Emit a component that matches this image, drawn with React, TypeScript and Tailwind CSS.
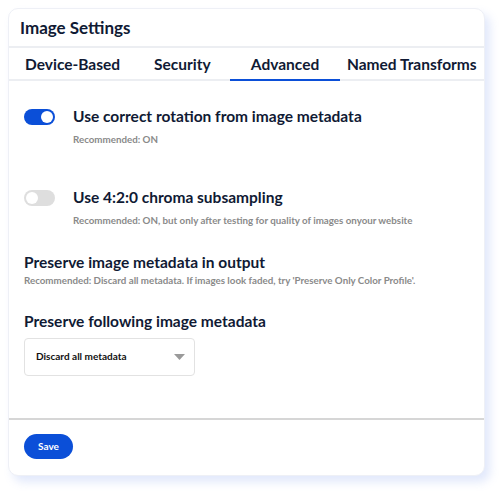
import { useState } from 'react';

function Toggle({ on, onChange }: { on: boolean; onChange: (v: boolean) => void }) {
  return (
    <button
      type="button"
      onClick={() => onChange(!on)}
      className={`flex h-[16px] w-[31px] shrink-0 items-center rounded-full px-[2px] ${
        on ? 'justify-end bg-[#0b4fd8]' : 'justify-start bg-[#dedede]'
      }`}
    >
      <span className="h-[12px] w-[12px] rounded-full bg-white" />
    </button>
  );
}

const font = { fontFamily: 'Lato, "Open Sans", sans-serif' };

export default function App() {
  const [rotation, setRotation] = useState(true);
  const [chroma, setChroma] = useState(false);
  const [tab, setTab] = useState('Advanced');

  return (
    <div className="h-[491px] w-[500px] bg-white p-2 text-[#101a34]" style={font}>
      <div className="flex h-[468px] w-[477px] flex-col rounded-[10px] border border-[#eef0f6] bg-white shadow-[5px_6px_10px_rgba(120,150,235,0.22)]">
        <div className="flex h-[39px] items-center border-b-2 border-[#eceef2] px-[11px] text-[17px] font-bold">
          Image Settings
        </div>

        <div className="flex h-[33px] items-stretch border-b-2 border-[#eceef2] pl-[16px] pt-[3px] text-[15.5px] font-bold">
          {[
            { name: 'Device-Based', w: 'w-[129px]', align: 'justify-start' },
            { name: 'Security', w: 'w-[76px]', align: 'justify-start' },
            { name: 'Advanced', w: 'w-[110px]', align: 'justify-center' },
            { name: 'Named Transforms', w: 'pl-[7px]', align: 'justify-start' },
          ].map((t) => (
            <button
              key={t.name}
              type="button"
              onClick={() => setTab(t.name)}
              className={`-mb-[2px] flex items-center border-b-2 ${t.w} ${t.align} ${
                tab === t.name ? 'border-[#0b4fd8]' : 'border-transparent'
              }`}
            >
              {t.name}
            </button>
          ))}
        </div>

        <div className="flex-1 px-[15px]">
          <div className="mt-[24px] flex items-center gap-[18px]">
            <Toggle on={rotation} onChange={setRotation} />
            <div className="text-[15.5px] font-bold">Use correct rotation from image metadata</div>
          </div>
          <div className="mt-[4px] pl-[49px] text-[9.75px] font-bold text-[#8a8a8a]">Recommended: ON</div>

          <div className="mt-[39px] flex items-center gap-[18px]">
            <Toggle on={chroma} onChange={setChroma} />
            <div className="text-[15.5px] font-bold">Use 4:2:0 chroma subsampling</div>
          </div>
          <div className="mt-[4px] pl-[49px] text-[9.75px] font-bold text-[#8a8a8a]">
            Recommended: ON, but only after testing for quality of images onyour website
          </div>

          <div className="mt-[23px] text-[15.5px] font-bold">Preserve image metadata in output</div>
          <div className="-mt-[1px] text-[9.75px] font-bold text-[#8a8a8a]">
            Recommended: Discard all metadata. If images look faded, try 'Preserve Only Color Profile'.
          </div>

          <div className="mt-[22px] text-[15.5px] font-bold">Preserve following image metadata</div>
          <div className="mt-[5px] flex h-[38px] w-[171px] items-center justify-between rounded-[4px] border border-[#e2e2e2] pl-[11px] pr-[9px]">
            <span className="text-[10px] font-bold text-[#111]">Discard all metadata</span>
            <svg width="11" height="6" viewBox="0 0 11 6">
              <path d="M0 0h11L5.5 6z" fill="#9a9a9a" />
            </svg>
          </div>
        </div>

        <div className="border-t-2 border-[#d6d6d6] px-[15px] pb-[16px] pt-[14px]">
          <button
            type="button"
            className="flex h-[25px] w-[49px] items-center justify-center rounded-full bg-[#0b4fd8] text-[10px] font-bold text-white"
          >
            Save
          </button>
        </div>
      </div>
    </div>
  );
}
